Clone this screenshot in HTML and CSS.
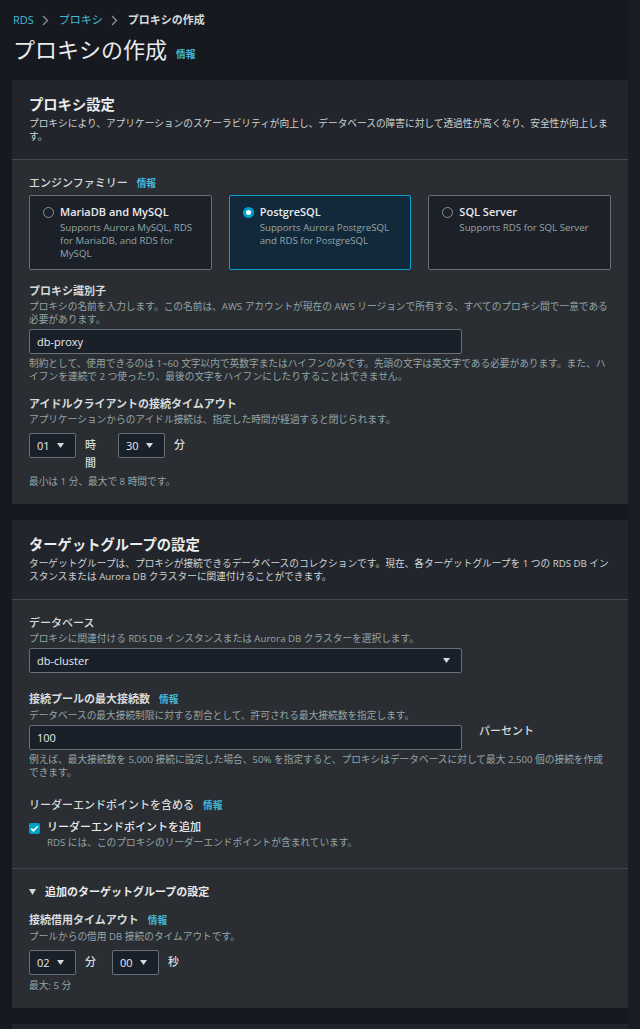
FILE: index.html
```html
<!DOCTYPE html>
<html lang="ja">
<head>
<meta charset="utf-8">
<title>プロキシの作成</title>
<link rel="stylesheet" href="styles.css">
</head>
<body>
<div class="page">
  <main class="main">
    <nav class="crumbs">
      <a href="#">RDS</a>
      <span class="sep"><svg width="7" height="11" viewBox="0 0 7 11"><path d="M1 1l4.5 4.5L1 10" fill="none" stroke="#879596" stroke-width="1.3"/></svg></span>
      <a href="#">プロキシ</a>
      <span class="sep"><svg width="7" height="11" viewBox="0 0 7 11"><path d="M1 1l4.5 4.5L1 10" fill="none" stroke="#879596" stroke-width="1.3"/></svg></span>
      <span class="current">プロキシの作成</span>
    </nav>
    <header class="page-head">
      <h1>プロキシの作成</h1>
      <a class="info" href="#">情報</a>
    </header>

    <section class="panel">
      <div class="panel-head">
        <h2>プロキシ設定</h2>
        <p>プロキシにより、アプリケーションのスケーラビリティが向上し、データベースの障害に対して透過性が高くなり、安全性が向上します。</p>
      </div>
      <div class="panel-body">
        <div class="label label-light">エンジンファミリー<a class="info" href="#">情報</a></div>
        <div class="tiles">
          <div class="tile">
            <span class="radio"></span>
            <div class="tile-text">
              <div class="tile-title">MariaDB and MySQL</div>
              <div class="tile-desc">Supports Aurora MySQL, RDS for MariaDB, and RDS for MySQL</div>
            </div>
          </div>
          <div class="tile selected">
            <span class="radio on"></span>
            <div class="tile-text">
              <div class="tile-title">PostgreSQL</div>
              <div class="tile-desc">Supports Aurora PostgreSQL and RDS for PostgreSQL</div>
            </div>
          </div>
          <div class="tile">
            <span class="radio"></span>
            <div class="tile-text">
              <div class="tile-title">SQL Server</div>
              <div class="tile-desc">Supports RDS for SQL Server</div>
            </div>
          </div>
        </div>

        <div class="label f-ident">プロキシ識別子</div>
        <div class="desc">プロキシの名前を入力します。この名前は、AWS アカウントが現在の AWS リージョンで所有する、すべてのプロキシ間で一意である必要があります。</div>
        <div class="input">db-proxy</div>
        <div class="desc after">制約として、使用できるのは 1~60 文字以内で英数字またはハイフンのみです。先頭の文字は英文字である必要があります。また、ハイフンを連続で 2 つ使ったり、最後の文字をハイフンにしたりすることはできません。</div>

        <div class="label f-idle">アイドルクライアントの接続タイムアウト</div>
        <div class="desc">アプリケーションからのアイドル接続は、指定した時間が経過すると閉じられます。</div>
        <div class="time-row">
          <div class="time-group wide">
            <div class="mini-select">01<svg class="caret" width="7" height="5" viewBox="0 0 7 5"><path d="M0 0h7L3.5 5z" fill="#d5dbdb"/></svg></div>
            <span class="unit narrow">時間</span>
          </div>
          <div class="time-group">
            <div class="mini-select">30<svg class="caret" width="7" height="5" viewBox="0 0 7 5"><path d="M0 0h7L3.5 5z" fill="#d5dbdb"/></svg></div>
            <span class="unit">分</span>
          </div>
        </div>
        <div class="desc hint">最小は 1 分、最大で 8 時間です。</div>
      </div>
    </section>

    <section class="panel">
      <div class="panel-head">
        <h2>ターゲットグループの設定</h2>
        <p>ターゲットグループは、プロキシが接続できるデータベースのコレクションです。現在、各ターゲットグループを 1 つの RDS DB インスタンスまたは Aurora DB クラスターに関連付けることができます。</p>
      </div>
      <div class="panel-body split">
        <div class="label label-light">データベース</div>
        <div class="desc">プロキシに関連付ける RDS DB インスタンスまたは Aurora DB クラスターを選択します。</div>
        <div class="input select">db-cluster<svg class="caret" width="7" height="5" viewBox="0 0 7 5"><path d="M0 0h7L3.5 5z" fill="#d5dbdb"/></svg></div>

        <div class="label f-next">接続プールの最大接続数<a class="info" href="#">情報</a></div>
        <div class="desc">データベースの最大接続制限に対する割合として、許可される最大接続数を指定します。</div>
        <div class="input-row">
          <div class="input">100</div>
          <span class="suffix">パーセント</span>
        </div>
        <div class="desc after">例えば、最大接続数を 5,000 接続に設定した場合、50% を指定すると、プロキシはデータベースに対して最大 2,500 個の接続を作成できます。</div>

        <div class="label label-light f-next">リーダーエンドポイントを含める<a class="info" href="#">情報</a></div>
        <div class="check-row">
          <span class="checkbox"><svg width="11" height="11" viewBox="0 0 11 11"><path d="M2.3 5.6l2.2 2.2 4.2-4.6" fill="none" stroke="#fff" stroke-width="1.7"/></svg></span>
          <div>
            <div class="check-label">リーダーエンドポイントを追加</div>
            <div class="desc">RDS には、このプロキシのリーダーエンドポイントが含まれています。</div>
          </div>
        </div>
      </div>
      <div class="expand">
        <div class="expand-head"><svg width="7" height="6" viewBox="0 0 7 6"><path d="M0 0h7L3.5 6z" fill="#d5dbdb"/></svg><span>追加のターゲットグループの設定</span></div>
        <div class="label f-borrow">接続借用タイムアウト<a class="info" href="#">情報</a></div>
        <div class="desc">プールからの借用 DB 接続のタイムアウトです。</div>
        <div class="time-row">
          <div class="time-group">
            <div class="mini-select">02<svg class="caret" width="7" height="5" viewBox="0 0 7 5"><path d="M0 0h7L3.5 5z" fill="#d5dbdb"/></svg></div>
            <span class="unit">分</span>
          </div>
          <div class="time-group">
            <div class="mini-select">00<svg class="caret" width="7" height="5" viewBox="0 0 7 5"><path d="M0 0h7L3.5 5z" fill="#d5dbdb"/></svg></div>
            <span class="unit">秒</span>
          </div>
        </div>
        <div class="desc hint2">最大: 5 分</div>
      </div>
    </section>

    <section class="panel stub">
      <div class="panel-head stub-head"></div>
    </section>
  </main>
  <div class="rail"></div>
</div>
</body>
</html>
```

FILE: styles.css
```css
* { box-sizing: border-box; }

body {
  margin: 0;
  background: #16191f;
  color: #d5dbdb;
  font-family: "Open Sans", "Noto Sans CJK JP", sans-serif;
  font-size: 11px;
  overflow: hidden;
}

.page {
  display: flex;
  height: 1029px;
}

.main {
  flex: 1;
  padding: 12px 0 0 12px;
}

.rail {
  width: 12px;
  background: #1a1d23;
}

/* breadcrumbs */
.crumbs {
  display: flex;
  align-items: center;
  height: 16px;
  line-height: 16px;
  font-size: 11px;
  padding-left: 1px;
}
.crumbs a {
  color: #44b9d6;
  text-decoration: none;
}
.crumbs .sep {
  display: flex;
  margin: 0 10px 0 8px;
}
.crumbs .current {
  font-weight: 700;
  color: #d5dbdb;
}

/* page title */
.page-head {
  display: flex;
  align-items: baseline;
  margin-top: 7px;
}
h1 {
  margin: 0 0 0 1px;
  font-size: 22px;
  line-height: 28px;
  font-weight: 400;
  color: #e9ebed;
}
.info {
  color: #44b9d6;
  font-size: 9.7px;
  font-weight: 700;
  margin-left: 9px;
  text-decoration: none;
}

/* panels */
.panel {
  margin-top: 17px;
  background: #2a2e33;
  width: 616px;
}
.panel + .panel {
  margin-top: 16px;
}
.panel-head {
  background: #22262c;
  padding: 16px 17px 16px;
  border-bottom: 1px solid #414750;
}
h2 {
  margin: 0;
  font-size: 14.3px;
  line-height: 18px;
  font-weight: 700;
  color: #eaeded;
}
.panel-head p {
  margin: 3px 0 0;
  font-size: 9.7px;
  line-height: 13px;
  color: #cdd3d4;
}
.panel-body {
  padding: 15px 17px 16px;
}
.panel-body.split {
  padding-bottom: 19px;
}

/* form fields */
.label {
  display: flex;
  align-items: baseline;
  font-size: 11px;
  line-height: 16px;
  font-weight: 700;
  color: #d5dbdb;
}
.label-light {
  font-weight: 500;
}
.desc {
  margin-top: 1px;
  font-size: 9.7px;
  line-height: 13px;
  color: #95a5a6;
}
.desc.after {
  margin-top: 3px;
}
.f-ident { margin-top: 13px; }
.f-idle { margin-top: 13px; }
.f-next { margin-top: 18px; }

/* tiles */
.tiles {
  display: grid;
  grid-template-columns: 1fr 1fr 1fr;
  gap: 17px;
  margin-top: 3px;
}
.tile {
  display: flex;
  gap: 6px;
  padding: 8px 10px 9px 13px;
  border: 1px solid #687078;
  border-radius: 2px;
  background: #1b2029;
}
.tile.selected {
  border-color: #0a9fcc;
  background: #12293b;
}
.radio {
  flex: none;
  width: 11px;
  height: 11px;
  margin-top: 2.5px;
  border: 1.5px solid #879596;
  border-radius: 50%;
}
.radio.on {
  border: 3.5px solid #00a1c9;
  background: #fff;
}
.tile-title {
  font-size: 11px;
  line-height: 16px;
  font-weight: 600;
  color: #e9ebed;
}
.tile-desc {
  margin-top: 1px;
  font-size: 9.7px;
  line-height: 13px;
  color: #95a5a6;
}

/* inputs */
.input {
  display: flex;
  align-items: center;
  width: 433px;
  height: 25px;
  margin-top: 3px;
  padding: 0 7px;
  border: 1px solid #687078;
  border-radius: 2px;
  background: #1a2029;
  font-size: 11px;
  color: #e9ebed;
}
.input.select {
  justify-content: space-between;
  padding-right: 11px;
}
.input-row {
  display: flex;
  align-items: flex-start;
  gap: 17px;
}
.suffix {
  margin-top: 1px;
  line-height: 16px;
  font-weight: 500;
  color: #d5dbdb;
}

/* time selects */
.time-row {
  display: flex;
  align-items: flex-start;
  margin-top: 7px;
}
.time-group {
  display: flex;
  align-items: flex-start;
  gap: 9px;
  margin-right: 16px;
}
.time-group.wide {
  margin-right: 22px;
}
.mini-select {
  display: flex;
  align-items: center;
  justify-content: space-between;
  width: 47px;
  height: 25px;
  padding: 0 11px 0 7px;
  border: 1px solid #687078;
  border-radius: 2px;
  background: #1a2029;
  font-size: 11px;
  color: #e9ebed;
}
.unit {
  margin-top: 3px;
  font-size: 11px;
  line-height: 18px;
  font-weight: 500;
  color: #d5dbdb;
}
.unit.narrow {
  width: 11px;
  word-break: break-all;
}
.hint {
  margin-top: 3px;
}
.hint2 {
  margin-top: 4px;
}

/* checkbox */
.check-row {
  display: flex;
  gap: 7px;
  margin-top: 5px;
}
.checkbox {
  flex: none;
  display: flex;
  width: 11px;
  height: 11px;
  margin-top: 4px;
  border-radius: 2px;
  background: #00a1c9;
}
.check-label {
  font-size: 11px;
  line-height: 16px;
  font-weight: 500;
  color: #e9ebed;
}

/* expandable section */
.expand {
  border-top: 1px solid #414750;
  padding: 15px 17px 16px;
}
.expand-head {
  display: flex;
  align-items: center;
  gap: 9px;
  font-size: 11px;
  line-height: 16px;
  font-weight: 700;
  color: #e9ebed;
}
.f-borrow {
  margin-top: 12px;
}

/* partially visible panel */
.stub-head {
  height: 7px;
  padding: 0;
  border-bottom: none;
}
```
